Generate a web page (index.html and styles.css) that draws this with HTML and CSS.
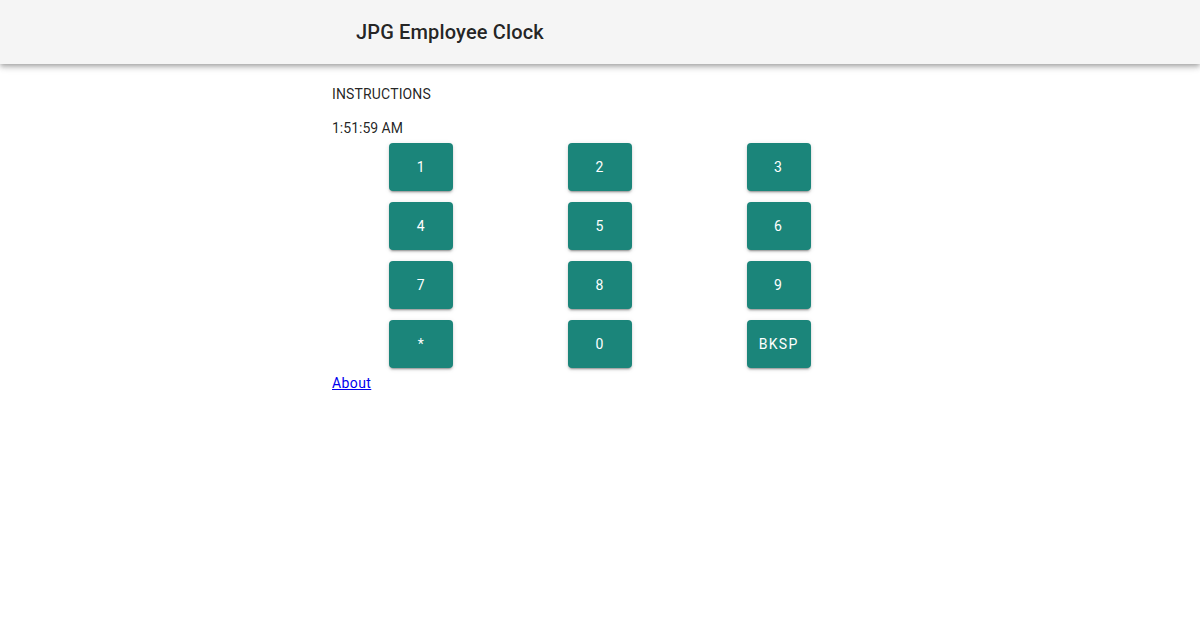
FILE: index.html
```html
<!DOCTYPE html>
<html>
<head>
<meta charset="utf-8">
<title>JPG Employee Clock</title>
<link rel="stylesheet" href="styles.css">
</head>
<body>
<header class="toolbar">
  <div class="toolbar-inner">
    <span class="title">JPG Employee Clock</span>
  </div>
</header>
<main class="container">
  <div class="instructions">INSTRUCTIONS</div>
  <div class="time">1:51:59 AM</div>
  <div class="keypad">
    <div class="cell"><button class="key">1</button></div>
    <div class="cell"><button class="key">2</button></div>
    <div class="cell"><button class="key">3</button></div>
    <div class="cell"><button class="key">4</button></div>
    <div class="cell"><button class="key">5</button></div>
    <div class="cell"><button class="key">6</button></div>
    <div class="cell"><button class="key">7</button></div>
    <div class="cell"><button class="key">8</button></div>
    <div class="cell"><button class="key">9</button></div>
    <div class="cell"><button class="key">*</button></div>
    <div class="cell"><button class="key">0</button></div>
    <div class="cell"><button class="key">BKSP</button></div>
  </div>
  <a class="about" href="#">About</a>
</main>
</body>
</html>
```
FILE: styles.css
```css
html, body {
  margin: 0;
  padding: 0;
  background: #ffffff;
  font-family: Roboto, "Noto Sans", sans-serif;
}
.toolbar {
  height: 64px;
  background: #f5f5f5;
  box-shadow: 0 2px 4px -1px rgba(0,0,0,.2), 0 4px 5px 0 rgba(0,0,0,.14), 0 1px 10px 0 rgba(0,0,0,.12);
  display: flex;
  align-items: center;
}
.toolbar-inner {
  width: 536px;
  margin: 0 auto;
  padding-left: 24px;
  box-sizing: border-box;
}
.title {
  font-size: 20px;
  font-weight: 500;
  color: rgba(0,0,0,.87);
  letter-spacing: 0.15px;
}
.container {
  width: 536px;
  margin: 0 auto;
  padding-top: 20px;
  color: rgba(0,0,0,.87);
  font-size: 14px;
}
.instructions {
  line-height: 20px;
  letter-spacing: 0.15px;
}
.time {
  line-height: 20px;
  margin-top: 14px;
}
.keypad {
  display: grid;
  grid-template-columns: repeat(3, 1fr);
  row-gap: 11px;
  margin-top: 5px;
}
.cell {
  display: flex;
  justify-content: center;
}
.key {
  width: 64px;
  height: 48px;
  border: none;
  border-radius: 4px;
  background: #1b857a;
  color: #ffffff;
  font-family: Roboto, "Noto Sans", sans-serif;
  font-size: 14px;
  font-weight: 400;
  letter-spacing: 1.25px;
  padding: 0;
  box-shadow: 0 3px 1px -2px rgba(0,0,0,.2), 0 2px 2px 0 rgba(0,0,0,.14), 0 1px 5px 0 rgba(0,0,0,.12);
}
.about {
  display: inline-block;
  margin-top: 5px;
  line-height: 20px;
  color: #0000ee;
  font-size: 14px;
  letter-spacing: 0.4px;
}
```
